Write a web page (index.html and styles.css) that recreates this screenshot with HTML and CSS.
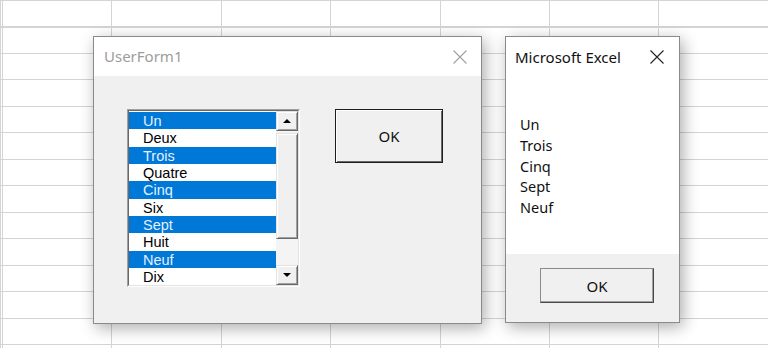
FILE: index.html
```html
<!DOCTYPE html>
<html>
<head>
<meta charset="utf-8">
<link rel="stylesheet" href="styles.css">
</head>
<body>
<div class="sheet">
  <div class="win userform">
    <div class="titlebar">
      <span class="title muted">UserForm1</span>
      <svg class="close" viewBox="0 0 14 14" width="14" height="14"><path d="M0.5 0.5L13.5 13.5M13.5 0.5L0.5 13.5" stroke="#a0a0a0" stroke-width="1.1" fill="none"/></svg>
    </div>
    <div class="uf-body">
      <div class="listbox">
        <div class="lb-inner">
          <ul class="items">
            <li class="sel">Un</li>
            <li>Deux</li>
            <li class="sel">Trois</li>
            <li>Quatre</li>
            <li class="sel">Cinq</li>
            <li>Six</li>
            <li class="sel">Sept</li>
            <li>Huit</li>
            <li class="sel">Neuf</li>
            <li>Dix</li>
          </ul>
          <div class="vscroll">
            <div class="bevel sbtn"><span class="tri tri-up"></span></div>
            <div class="track"><div class="bevel thumb"></div></div>
            <div class="bevel sbtn"><span class="tri tri-down"></span></div>
          </div>
        </div>
      </div>
      <button class="classic-btn">OK</button>
    </div>
  </div>

  <div class="win msgbox">
    <div class="titlebar mb-title">
      <span class="title">Microsoft Excel</span>
      <svg class="close" viewBox="0 0 14 14" width="14" height="14"><path d="M0.5 0.5L13.5 13.5M13.5 0.5L0.5 13.5" stroke="#222" stroke-width="1.1" fill="none"/></svg>
    </div>
    <div class="mb-content">
      <div>Un</div>
      <div>Trois</div>
      <div>Cinq</div>
      <div>Sept</div>
      <div>Neuf</div>
    </div>
    <div class="mb-footer">
      <button class="mb-btn">OK</button>
    </div>
  </div>
</div>
</body>
</html>
```

FILE: styles.css
```css
html, body {
  margin: 0;
  padding: 0;
}
body {
  width: 768px;
  height: 348px;
  overflow: hidden;
  background: #fff;
  font-family: "Noto Sans", "Open Sans", sans-serif;
}
.sheet {
  position: relative;
  width: 768px;
  height: 348px;
  background-color: #fff;
  background-image:
    repeating-linear-gradient(to right, #d4d4d4 0, #d4d4d4 1px, transparent 1px, transparent 109.4px),
    repeating-linear-gradient(to bottom, #d4d4d4 0, #d4d4d4 1px, transparent 1px, transparent 26.5px);
  background-position: 2px 0, 0 0;
}
.win {
  position: absolute;
  box-sizing: border-box;
  border: 1px solid #8a8a8a;
  display: flex;
  flex-direction: column;
  box-shadow: 3px 4px 15px rgba(0, 0, 0, 0.33);
  background: #fff;
}
.userform {
  left: 93px;
  top: 36px;
  width: 389px;
  height: 288px;
}
.titlebar {
  height: 39px;
  flex: none;
  display: flex;
  align-items: center;
  justify-content: space-between;
  padding: 0 14px 0 10px;
  background: #fff;
}
.title {
  font-size: 15px;
  color: #111;
  line-height: 1;
}
.title.muted {
  color: #9c9c9c;
}
.close {
  display: block;
  width: 14px;
  height: 14px;
}
.uf-body {
  flex: 1;
  background: #f0f0f0;
  display: flex;
  align-items: flex-start;
  gap: 35px;
  padding: 33px 0 0 33px;
}
.listbox {
  box-sizing: border-box;
  width: 173px;
  height: 178px;
  border: 1px solid;
  border-color: #a0a0a0 #fff #fff #a0a0a0;
}
.lb-inner {
  box-sizing: border-box;
  height: 100%;
  border: 1px solid;
  border-color: #696969 #e3e3e3 #e3e3e3 #696969;
  background: #fff;
  display: flex;
}
.items {
  list-style: none;
  margin: 0;
  padding: 1px 0 0 0;
  flex: 1;
  overflow: hidden;
  font-family: "Liberation Sans", Arial, sans-serif;
  font-size: 14.5px;
  color: #000;
}
.items li {
  height: 17.33px;
  line-height: 18.5px;
  padding-left: 14px;
}
.items li.sel {
  background: #0078d7;
  color: #e2f0ff;
}
.vscroll {
  width: 22px;
  flex: none;
  display: flex;
  flex-direction: column;
  background: #f4f4f4;
}
.bevel {
  box-sizing: border-box;
  background: #f0f0f0;
  border: 1px solid;
  border-color: #e3e3e3 #696969 #696969 #e3e3e3;
  box-shadow: inset 1px 1px 0 #fff, inset -1px -1px 0 #a0a0a0;
}
.sbtn {
  height: 20px;
  flex: none;
  display: flex;
  align-items: center;
  justify-content: center;
}
.track {
  flex: 1;
  padding-top: 2px;
}
.thumb {
  height: 106px;
}
.tri {
  width: 0;
  height: 0;
  border-left: 4px solid transparent;
  border-right: 4px solid transparent;
}
.tri-up {
  border-bottom: 4px solid #000;
}
.tri-down {
  border-top: 4px solid #000;
}
.classic-btn {
  box-sizing: border-box;
  width: 108px;
  height: 54px;
  margin: 0;
  padding: 0;
  background: #f0f0f0;
  border: 1px solid #1e1e1e;
  box-shadow: inset 1px 1px 0 #fff, inset -1px -1px 0 #696969;
  font-family: "Noto Sans", sans-serif;
  font-size: 15px;
  color: #111;
}
.msgbox {
  left: 505px;
  top: 36px;
  width: 175px;
  height: 287px;
}
.mb-title {
  height: 40px;
  padding: 0 15px 0 9px;
}
.mb-content {
  flex: 1;
  background: #fff;
  padding: 37px 0 0 14px;
  font-size: 14.5px;
  line-height: 20.75px;
  color: #111;
}
.mb-footer {
  height: 68px;
  flex: none;
  background: #f0f0f0;
  box-sizing: border-box;
  padding: 14px 0 0 34px;
}
.mb-btn {
  box-sizing: border-box;
  width: 114px;
  height: 35px;
  margin: 0;
  padding: 0;
  background: #f0f0f0;
  border: 1px solid;
  border-color: #8a8a8a #4a4a4a #4a4a4a #8a8a8a;
  box-shadow: inset -1px -1px 0 #a0a0a0;
  font-family: "Noto Sans", sans-serif;
  font-size: 15px;
  color: #111;
}
```
